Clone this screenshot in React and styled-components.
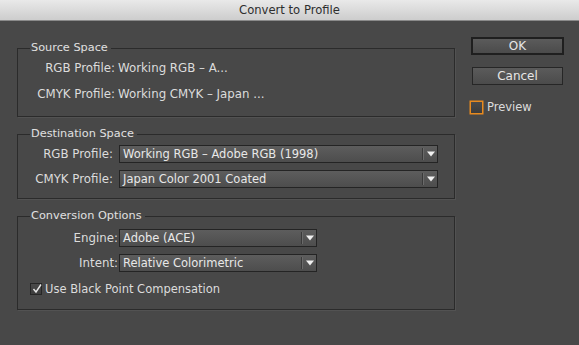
import React from "react";
import styled, { createGlobalStyle } from "styled-components";

const Global = createGlobalStyle`
  html, body { margin: 0; padding: 0; background: #484848; }
  body { font-family: "DejaVu Sans", "Liberation Sans", sans-serif; font-size: 11.8px; color: #dcdcdc; }
`;

const Window = styled.div`
  width: 579px;
  height: 345px;
  display: flex;
  flex-direction: column;
  background: #484848;
  overflow: hidden;
`;

const TitleBar = styled.div`
  height: 21px;
  box-sizing: border-box;
  display: flex;
  align-items: center;
  justify-content: center;
  background: linear-gradient(#e9e9e9, #cdcdcd);
  border-bottom: 1px solid #8a8a8a;
  color: #2e2e2e;
  font-size: 11.6px;
  padding-bottom: 1px;
`;

const Body = styled.div`
  flex: 1;
  display: flex;
  padding: 16px 15px 0 17px;
  gap: 16px;
`;

const LeftCol = styled.div`
  width: 438px;
  display: flex;
  flex-direction: column;
  padding-top: 4px;
`;

const Group = styled.fieldset`
  margin: 0 0 ${(p) => p.$mb || 0}px 0;
  padding: ${(p) => p.$pt}px 0 ${(p) => p.$pb}px 12px;
  border: 1px solid #2b2b2b;
  box-shadow: 1px 1px 0 rgba(255, 255, 255, 0.06);
  min-width: 0;
`;

const Legend = styled.legend`
  padding: 0 3px 0 1px;
  line-height: 14px;
  font-size: 11.3px;
  color: #e0e0e0;
`;

const Rows = styled.div`
  display: grid;
  grid-template-columns: ${(p) => p.$label}px auto;
  column-gap: ${(p) => p.$gap}px;
  row-gap: ${(p) => p.$rowGap}px;
  align-items: center;
  justify-content: start;
`;

const Label = styled.div`
  text-align: right;
  white-space: nowrap;
  line-height: 18px;
`;

const Value = styled.div`
  white-space: nowrap;
  line-height: 18px;
`;

const Select = styled.div`
  width: ${(p) => p.$w}px;
  height: 18px;
  box-sizing: border-box;
  border: 1px solid #242424;
  background: linear-gradient(#5d5d5d, #4d4d4d);
  display: flex;
  align-items: center;
  color: #e8e8e8;
  font-size: 11.5px;
`;

const SelectText = styled.span`
  flex: 1;
  padding-left: 3px;
  white-space: nowrap;
  overflow: hidden;
`;

const Divider = styled.span`
  width: 1px;
  height: 12px;
  background: #3a3a3a;
  border-right: 1px solid #6a6a6a;
`;

const Arrow = styled.span`
  width: 13px;
  display: flex;
  justify-content: center;
  align-items: center;
`;

const CheckRow = styled.div`
  display: flex;
  align-items: center;
  gap: 3px;
  margin-top: 10px;
  line-height: 14px;
  font-size: 11.5px;
`;

const Box = styled.span`
  width: ${(p) => p.$size}px;
  height: ${(p) => p.$size}px;
  box-sizing: border-box;
  border: 1px solid ${(p) => (p.$focus ? "#e88a1e" : "#262626")};
  box-shadow: ${(p) => (p.$focus ? "0 0 0 0.5px #e88a1e" : "none")};
  background: linear-gradient(#4a4a4a, #3c3c3c);
  display: flex;
  align-items: center;
  justify-content: center;
  position: relative;
  flex: none;
`;

const RightCol = styled.div`
  display: flex;
  flex-direction: column;
  width: 93px;
`;

const Button = styled.div`
  height: 18px;
  box-sizing: border-box;
  border: ${(p) => (p.$default ? "2px solid #1f1f1f" : "1px solid #262626")};
  background: linear-gradient(#5b5b5b, #4b4b4b);
  display: flex;
  align-items: center;
  justify-content: center;
  color: #e6e6e6;
  font-size: 12px;
  margin-bottom: 12px;
  margin-left: ${(p) => (p.$default ? 0 : 1)}px;
  margin-right: ${(p) => (p.$default ? 0 : 1)}px;
`;

const PreviewRow = styled.div`
  display: flex;
  align-items: center;
  gap: 4px;
  margin-top: 4px;
  margin-left: -1px;
  font-size: 11.5px;
  line-height: 13px;
`;

const Tri = () => (
  <svg width="8" height="6" viewBox="0 0 8 6">
    <path d="M0 0.5 H8 L4 5.5 Z" fill="#f0f0f0" />
  </svg>
);

const Dropdown = ({ w, children }) => (
  <Select $w={w}>
    <SelectText>{children}</SelectText>
    <Divider />
    <Arrow>
      <Tri />
    </Arrow>
  </Select>
);

const Check = () => (
  <svg width="12" height="12" viewBox="0 0 12 12" style={{ position: "absolute", left: 0, top: -1 }}>
    <path d="M2.5 6 L5 9 L10 1.5" stroke="#e6e6e6" strokeWidth="1.4" fill="none" />
  </svg>
);

export default function App() {
  return (
    <Window>
      <Global />
      <TitleBar>Convert to Profile</TitleBar>
      <Body>
        <LeftCol>
          <Group $pt={4} $pb={13} $mb={10}>
            <Legend>Source Space</Legend>
            <Rows $label={85} $gap={3} $rowGap={8}>
              <Label>RGB Profile:</Label>
              <Value>Working RGB – A...</Value>
              <Label>CMYK Profile:</Label>
              <Value>Working CMYK – Japan ...</Value>
            </Rows>
          </Group>
          <Group $pt={4} $pb={10} $mb={10}>
            <Legend>Destination Space</Legend>
            <Rows $label={83} $gap={6} $rowGap={7}>
              <Label>RGB Profile:</Label>
              <Dropdown w={319}>Working RGB – Adobe RGB (1998)</Dropdown>
              <Label>CMYK Profile:</Label>
              <Dropdown w={319}>Japan Color 2001 Coated</Dropdown>
            </Rows>
          </Group>
          <Group $pt={6} $pb={13}>
            <Legend>Conversion Options</Legend>
            <Rows $label={88} $gap={1} $rowGap={7}>
              <Label>Engine:</Label>
              <Dropdown w={198}>Adobe (ACE)</Dropdown>
              <Label>Intent:</Label>
              <Dropdown w={198}>Relative Colorimetric</Dropdown>
            </Rows>
            <CheckRow>
              <Box $size={12}>
                <Check />
              </Box>
              Use Black Point Compensation
            </CheckRow>
          </Group>
        </LeftCol>
        <RightCol>
          <Button $default>OK</Button>
          <Button>Cancel</Button>
          <PreviewRow>
            <Box $size={13} $focus />
            Preview
          </PreviewRow>
        </RightCol>
      </Body>
    </Window>
  );
}
